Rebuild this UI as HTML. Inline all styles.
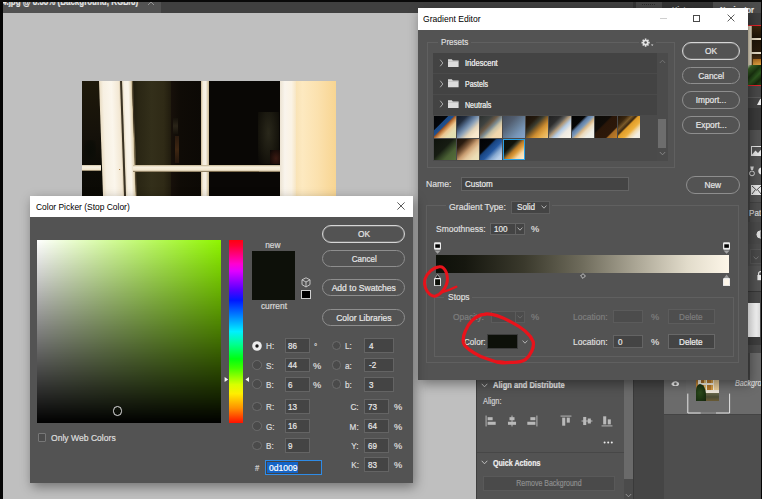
<!DOCTYPE html>
<html lang="en">
<head>
<meta charset="utf-8">
<title>Gradient Editor</title>
<style>
*{box-sizing:border-box;margin:0;padding:0}
html,body{width:762px;height:499px;overflow:hidden}
body{position:relative;background:#bfbfbf;font-family:"Liberation Sans",sans-serif;font-size:10px;color:#dedede;line-height:1}
.a{position:absolute}
.t{position:absolute;white-space:nowrap;display:block;-webkit-text-stroke:0.22px}
.in{position:absolute;background:#444;border:1px solid #646464}
.btn{position:absolute;border:1px solid #8e8e8e;border-radius:10px}
.btn.def{border-color:#d6d6d6;box-shadow:inset 0 0 0 0.7px #7c7c7c}
.rad{position:absolute;width:9.6px;height:9.6px;border-radius:50%;border:1px solid #6c6c6c;background:#4a4a4a}
.rad.on{border:2.7px solid #e8e8e8;background:#2e2e2e}
.fs{position:absolute;border:1px solid #606060}
.dlg{position:absolute;background:#535353;box-shadow:2px 4px 11px rgba(0,0,0,.40)}
</style>
</head>
<body>

<!-- application chrome -->
<div class="a" style="left:0px;top:0px;width:762px;height:12.6px;background:#404040;"></div>
<div class="a" style="left:0px;top:0px;width:762px;height:1.8px;background:#0a0a0a;"></div>
<div class="a" style="left:3px;top:1.8px;width:158px;height:10.8px;background:#525252;overflow:hidden"><span class="t" style="left:-1.4px;top:-7px;height:13px;line-height:13px;font-size:10.6px;font-weight:bold;color:#e4e4e4;transform-origin:0 50%;transform:scaleX(0.752)">4.jpg @ 8.33% (Background, RGB/8) *</span><svg class="a" style="left:144.4px;top:-3.4px" width="8" height="8" viewBox="0 0 8 8"><path d="M1 1L7 7M7 1L1 7" stroke="#9c9c9c" stroke-width="0.9"/></svg></div>
<div class="a" style="left:0px;top:1.8px;width:3px;height:498px;background:#050505;"></div>
<!-- photo on canvas -->
<div class="a" style="left:82px;top:80.5px;width:254px;height:120px;background:#0c0a06;overflow:hidden"><div class="a" style="left:0px;top:0px;width:24px;height:120px;background:linear-gradient(to bottom,#1e190a,#15110a 45%,#0d0c06 70%,#0a0904);"></div><div class="a" style="left:2px;top:59.5px;width:12px;height:22px;background:radial-gradient(ellipse at 50% 50%,#0a0c06 0%,#0d0d07 60%,rgba(13,13,7,0) 100%);"></div><div class="a" style="left:49px;top:0px;width:41px;height:120px;background:linear-gradient(to right,#1c190c,#2a2614 18%,#332f1a 50%,#2f2a16 80%,#1f1a0d);"></div><div class="a" style="left:88.6px;top:0px;width:31px;height:120px;background:linear-gradient(to right,#17100a,#0f0b06 30%,#0c0905);"></div><div class="a" style="left:93.4px;top:55.5px;width:3.6px;height:27px;background:linear-gradient(to bottom,#2a1a0e,#3e2612 50%,#24160c);"></div><div class="a" style="left:91px;top:37.5px;width:5px;height:16px;background:linear-gradient(to bottom,#15110a,#2a2418 50%,#15110a);"></div><div class="a" style="left:126.5px;top:0px;width:72.5px;height:120px;background:#090705;"></div><div class="a" style="left:176px;top:31.5px;width:21px;height:52px;background:radial-gradient(ellipse at 50% 40%,#2a281b 0%,#17150d 60%,#090705 100%);"></div><div class="a" style="left:188px;top:69.5px;width:10px;height:14px;background:radial-gradient(ellipse at 60% 60%,#3a1a12 0%,#1a0c08 70%,#090705 100%);"></div><div class="a" style="left:16.7px;top:0;width:40px;height:120px;transform-origin:0 0;transform:skewX(2deg)"><div class="a" style="left:0;top:0;width:21.6px;height:120px;background:linear-gradient(to right,#e9dcc2,#f7f0e2 18%,#fbf6ec 55%,#f3e8d4 88%,#cdbd9c)"></div><div class="a" style="left:21.4px;top:0;width:1.3px;height:120px;background:#3a3222"></div><div class="a" style="left:22.7px;top:0;width:10px;height:120px;background:linear-gradient(to right,#e4d8be,#f8f2e6 22%,#faf5ea 60%,#e6d9bc 88%,#b8a67e)"></div><div class="a" style="left:32.7px;top:0;width:1.8px;height:120px;background:linear-gradient(to bottom,#6a5c40,#3a3020 30%,#8a7a58 55%,#4a3e28 80%,#6a5c40)"></div><div class="a" style="left:17px;top:88px;width:1.2px;height:1.2px;background:#a8783c"></div></div><div class="a" style="left:119.2px;top:0px;width:7.4px;height:120px;background:linear-gradient(to right,#c8b692,#f4ecdc 25%,#f8f2e6 60%,#c4b28c);"></div><div class="a" style="left:0px;top:84.3px;width:18.6px;height:6.4px;background:linear-gradient(to bottom,#d4c6a6,#f8f2e4 30%,#f0e4ca 80%,#6a5a3c);"></div><div class="a" style="left:51.4px;top:84.5px;width:148px;height:6.6px;background:linear-gradient(to bottom,#c0b08c,#f8f1e0 28%,#f2e6cc 75%,#6e5e40);"></div><div class="a" style="left:127px;top:90.9px;width:50px;height:0.9px;background:#7a6a4c;"></div><div class="a" style="left:198.4px;top:0px;width:16px;height:120px;background:linear-gradient(to right,#ece3d2,#f9f4ec 30%,#fbf3e4 72%,#f7e6c4);"></div><div class="a" style="left:214px;top:0px;width:40px;height:120px;background:linear-gradient(to right,#f9e3b6,#fde9c0 16%,#fbe1ae 55%,#f8d592 100%);"></div></div>
<!-- properties panel -->
<div class="a" style="left:475.8px;top:360px;width:157.4px;height:139px;background:#535353;"></div>
<div class="a" style="left:475.8px;top:360px;width:1px;height:139px;background:#3e3e3e;"></div>
<svg class="a" style="left:481px;top:383px" width="7" height="5" viewBox="0 0 7 5"><path d="M0.7 0.8L3.5 3.8L6.3 0.8" stroke="#c8c8c8" stroke-width="0.9" fill="none"/></svg>
<span class="t" style="top:379.25px;height:11.3px;line-height:11.3px;font-size:9.4px;left:492.9px;transform-origin:0 50%;transform:scaleX(0.804);color:#eeeeee;font-weight:bold;">Align and Distribute</span>
<span class="t" style="top:396.3px;height:10.8px;line-height:10.8px;font-size:9px;left:482.8px;transform-origin:0 50%;transform:scaleX(0.822);color:#d0d0d0;">Align:</span>
<svg class="a" style="left:484.7px;top:414.5px" width="12" height="12" viewBox="0 0 11 11"><path d="M1 0.5V10.5" stroke="#b9b9b9" stroke-width="0.9"/><rect x="2.4" y="2" width="4.6" height="2.8" fill="#b9b9b9"/><rect x="2.4" y="6.2" width="7.4" height="2.8" fill="#b9b9b9"/></svg>
<svg class="a" style="left:505.5px;top:414.5px" width="12" height="12" viewBox="0 0 11 11"><path d="M5.5 0.5V10.5" stroke="#b9b9b9" stroke-width="0.9"/><rect x="3.2" y="2" width="4.6" height="2.8" fill="#b9b9b9"/><rect x="1.8" y="6.2" width="7.4" height="2.8" fill="#b9b9b9"/></svg>
<svg class="a" style="left:526.3px;top:414.5px" width="12" height="12" viewBox="0 0 11 11"><path d="M10 0.5V10.5" stroke="#b9b9b9" stroke-width="0.9"/><rect x="4" y="2" width="4.6" height="2.8" fill="#b9b9b9"/><rect x="1.2" y="6.2" width="7.4" height="2.8" fill="#b9b9b9"/></svg>
<svg class="a" style="left:560px;top:414.5px" width="12" height="12" viewBox="0 0 11 11"><path d="M0.5 1H10.5" stroke="#b9b9b9" stroke-width="0.9"/><rect x="2" y="2.4" width="2.8" height="7.4" fill="#b9b9b9"/><rect x="6.2" y="2.4" width="2.8" height="4.6" fill="#b9b9b9"/></svg>
<svg class="a" style="left:580.5px;top:414.5px" width="12" height="12" viewBox="0 0 11 11"><path d="M0.5 5.5H10.5" stroke="#b9b9b9" stroke-width="0.9"/><rect x="2" y="1.8" width="2.8" height="7.4" fill="#b9b9b9"/><rect x="6.2" y="3.2" width="2.8" height="4.6" fill="#b9b9b9"/></svg>
<svg class="a" style="left:600.6px;top:414.5px" width="12" height="12" viewBox="0 0 11 11"><path d="M0.5 10H10.5" stroke="#b9b9b9" stroke-width="0.9"/><rect x="2" y="1.2" width="2.8" height="7.4" fill="#b9b9b9"/><rect x="6.2" y="4" width="2.8" height="4.6" fill="#b9b9b9"/></svg>
<svg class="a" style="left:603px;top:441.4px" width="11" height="3" viewBox="0 0 11 3"><circle cx="1.6" cy="1.4" r="1" fill="#ececec"/><circle cx="5.2" cy="1.4" r="1" fill="#ececec"/><circle cx="8.8" cy="1.4" r="1" fill="#ececec"/></svg>
<div class="a" style="left:476.8px;top:452.2px;width:147px;height:1px;background:#474747;"></div>
<svg class="a" style="left:481px;top:460.4px" width="7" height="5" viewBox="0 0 7 5"><path d="M0.7 0.8L3.5 3.8L6.3 0.8" stroke="#c8c8c8" stroke-width="0.9" fill="none"/></svg>
<span class="t" style="top:456.65px;height:11.3px;line-height:11.3px;font-size:9.4px;left:492.9px;transform-origin:0 50%;transform:scaleX(0.757);color:#eeeeee;font-weight:bold;">Quick Actions</span>
<div class="a" style="left:482.9px;top:475.8px;width:132.6px;height:15.2px;background:#4a4a4a;border:1px solid #595959"></div>
<span class="t" style="top:478px;height:11px;line-height:11px;font-size:9.2px;left:486.24px;width:125.92px;text-align:center;transform-origin:50% 50%;transform:scaleX(0.762);color:#8e8e8e;">Remove Background</span>
<div class="a" style="left:623.6px;top:360px;width:9.8px;height:139px;background:#4b4b4b;"></div>
<div class="a" style="left:624.4px;top:360px;width:8.6px;height:119.4px;background:#6a6a6a;"></div>
<svg class="a" style="left:625px;top:493px" width="7" height="5" viewBox="0 0 7 5"><path d="M0.8 1L3.5 3.8L6.2 1" stroke="#9a9a9a" stroke-width="0.9" fill="none"/></svg>
<!-- right column panels -->
<div class="a" style="left:633.2px;top:12.6px;width:31px;height:487px;background:#454545;"></div>
<div class="a" style="left:633.2px;top:12.6px;width:1px;height:487px;background:#3a3a3a;"></div>
<div class="a" style="left:664px;top:12.6px;width:98px;height:487px;background:#4e4e4e;"></div>
<div class="a" style="left:664px;top:340px;width:98px;height:73.6px;background:#6b6b6b;"></div>
<div class="a" style="left:664px;top:413.8px;width:98px;height:1.2px;background:#444;"></div>
<div class="a" style="left:686px;top:340px;width:1px;height:73.6px;background:#626262;"></div>
<div class="a" style="left:727.4px;top:340px;width:1px;height:73.6px;background:#626262;"></div>
<svg class="a" style="left:670.6px;top:380.6px" width="8.8" height="5.8" viewBox="0 0 8.8 5.8"><path d="M0.2 2.9C1.6 0.8 3 0.2 4.4 0.2S7.2 0.8 8.6 2.9C7.2 5 5.8 5.6 4.4 5.6S1.6 5 0.2 2.9Z" fill="#f0f0f0"/><circle cx="4.4" cy="2.9" r="1.35" fill="#6b6b6b"/></svg>
<div class="a" style="left:686.4px;top:340px;width:43.8px;height:73.6px;background:#6e6e6e;"></div>
<svg class="a" style="left:686px;top:380px" width="45" height="34" viewBox="0 0 45 34"><path d="M1.8 13.6V33H14.8M30 33H43.6V13.6" stroke="#e4e4e4" stroke-width="1" fill="none"/><path d="M14.8 33H30" stroke="#8e8e8e" stroke-width="1"/></svg>
<div class="a" style="left:696.1px;top:371px;width:23.2px;height:29.8px;background:#3a2c18;overflow:hidden"><div class="a" style="left:0;top:0;width:23.2px;height:20px;background:linear-gradient(to bottom,#6a4418,#9a6420 40%,#c88c3c 70%,#8a6a3c)"></div><div class="a" style="left:2.4px;top:5px;width:20.8px;height:16px;background:linear-gradient(to right,#f4eee0 0 12%,#a86c28 12% 30%,#e8c070 30% 38%,#f4eee0 38% 44%,#b87a2c 44% 62%,#d8a048 62% 70%,#f4eee0 70% 78%,#e8cc98 78% 100%)"></div><div class="a" style="left:2.4px;top:12.4px;width:16px;height:1.2px;background:#f4eee0"></div><div class="a" style="left:2.4px;top:19.4px;width:20.8px;height:2.6px;background:#eee8da"></div><div class="a" style="left:9px;top:22px;width:14.2px;height:7.8px;background:linear-gradient(to bottom,#6a6a4c,#4a4c34 50%,#6a5a34)"></div><div class="a" style="left:0;top:13px;width:10px;height:16.8px;background:radial-gradient(ellipse at 40% 50%,#2c4c1c 0%,#1c3412 60%,#16260e 100%);border-radius:40% 60% 0 0"></div></div>
<span class="t" style="top:378.45px;height:10.3px;line-height:10.3px;font-size:8.6px;left:734.9px;transform-origin:0 50%;transform:scaleX(0.840);color:#e4e4e4;font-style:italic;-webkit-text-stroke:0.1px;">Background</span>
<!-- right strip -->
<div class="a" style="left:633.2px;top:1.8px;width:129px;height:10.8px;background:#333;"></div>
<div class="a" style="left:712.8px;top:1.8px;width:49.2px;height:10.8px;background:#4d4d4d;"></div>
<span class="t" style="top:4.35px;height:11.5px;line-height:11.5px;font-size:9.6px;left:720.4px;transform-origin:0 50%;transform:scaleX(0.768);color:#ededed;font-weight:bold;">Navigator</span>
<span class="t" style="top:4.35px;height:11.5px;line-height:11.5px;font-size:9.6px;left:671.6px;transform-origin:0 50%;transform:scaleX(0.756);color:#a8a8a8;font-weight:bold;">History</span>
<div class="a" style="left:635.8px;top:1.8px;width:26.2px;height:6px;background:#474747;"></div>
<div class="a" style="left:642px;top:3.6px;width:13px;height:1.6px;background:repeating-linear-gradient(to right,#2c2c2c 0 1px,#474747 1px 2px);"></div>
<div class="a" style="left:748px;top:12.6px;width:14px;height:74px;background:#3e3e3e;"></div>
<div class="a" style="left:748.4px;top:24.8px;width:13px;height:61px;background:#e0222a;"></div>
<div class="a" style="left:748.4px;top:26px;width:13px;height:58.6px;background:#241808;overflow:hidden"><div class="a" style="left:0;top:0;width:13px;height:39px;background:linear-gradient(to bottom,#3a2810,#1e1408 30%,#2a1c0c 70%,#6a4418)"></div><div class="a" style="left:0;top:0;width:3.6px;height:40px;background:linear-gradient(to right,#d8ccb0,#f0e8d4 60%,#a89878)"></div><div class="a" style="left:3px;top:12px;width:10px;height:1.8px;background:#e4dac4"></div><div class="a" style="left:3px;top:26px;width:10px;height:1.8px;background:#e4dac4"></div><div class="a" style="left:5px;top:33px;width:8px;height:6px;background:linear-gradient(to bottom,#a86a20,#e0a040)"></div><div class="a" style="left:0;top:38.6px;width:13px;height:20px;background:linear-gradient(135deg,#dfe6d0 0%,#3c6a28 14%,#1a3410 40%,#2e5a20 60%,#16280c 80%,#24481a 100%)"></div></div>
<div class="a" style="left:748px;top:85.8px;width:14px;height:11.6px;background:#484848;"></div>
<div class="a" style="left:748px;top:97.2px;width:14px;height:1px;background:#5a5a5a;"></div>
<div class="a" style="left:748px;top:98.2px;width:14px;height:10px;background:#444;"></div>
<svg class="a" style="left:756.8px;top:98.4px" width="5" height="7" viewBox="0 0 5 7"><path d="M0 7L3.4 0.4L5 2.4V7Z" fill="#ececec"/></svg>
<div class="a" style="left:748px;top:108px;width:14px;height:22px;background:#3a3a3a;"></div>
<div class="a" style="left:748px;top:130px;width:14px;height:72px;background:#535353;"></div>
<div class="a" style="left:748px;top:130px;width:2.2px;height:250px;background:#454545;"></div>
<svg class="a" style="left:751.4px;top:145.6px" width="11" height="10" viewBox="0 0 11 10"><rect x="0.5" y="0.5" width="10" height="9" fill="#535353" stroke="#e6e6e6" stroke-width="1"/><path d="M1 8.5L4.5 4.5L7 7L11 2.5V9.5H1Z" fill="#e6e6e6"/></svg>
<svg class="a" style="left:748.6px;top:166px" width="6" height="11" viewBox="0 0 6 11"><path d="M1.2 0.5H4.8L4 4H2Z" fill="#dcdcdc"/><circle cx="3" cy="7.4" r="2.4" fill="none" stroke="#dcdcdc" stroke-width="1"/></svg>
<svg class="a" style="left:758.2px;top:167px" width="4" height="8" viewBox="0 0 4 8"><path d="M4 0.2C1.4 0.6 0.3 2.2 0.3 4S1.4 7.4 4 7.8Z" fill="#e8e8e8"/></svg>
<svg class="a" style="left:751.4px;top:185px" width="11" height="10" viewBox="0 0 11 10"><rect x="0.5" y="0.5" width="10" height="9" fill="#e6e6e6" stroke="#e6e6e6" stroke-width="1"/><path d="M1 1L5.5 5.2L10 1M1 9L4.4 4.6M10 9L6.6 4.6" stroke="#535353" stroke-width="1" fill="none"/></svg>
<div class="a" style="left:748px;top:202px;width:14px;height:1px;background:#444;"></div>
<span class="t" style="top:207.4px;height:11.4px;line-height:11.4px;font-size:9.5px;left:749.4px;transform-origin:0 50%;transform:scaleX(0.850);color:#d8d8d8;">Paths</span>
<div class="a" style="left:748px;top:222px;width:14px;height:22px;background:#4a4a4a;"></div>
<svg class="a" style="left:755.6px;top:230px" width="7" height="9" viewBox="0 0 7 9"><circle cx="4.5" cy="4.5" r="3.6" fill="none" stroke="#e0e0e0" stroke-width="1"/><path d="M4.5 0.9A3.6 3.6 0 0 0 4.5 8.1Z" fill="#e0e0e0"/></svg>
<div class="a" style="left:748px;top:244px;width:14px;height:22px;background:#4d4d4d;"></div>
<div class="a" style="left:750px;top:249.4px;width:12px;height:14.6px;background:#4a4a4a;border:1px solid #565656"></div>
<svg class="a" style="left:753.4px;top:255.6px" width="6" height="4" viewBox="0 0 6 4"><path d="M0.6 0.6L3 3.2L5.4 0.6" stroke="#7c7c7c" stroke-width="0.85" fill="none"/></svg>
<div class="a" style="left:748px;top:266px;width:14px;height:25px;background:#535353;"></div>
<svg class="a" style="left:756.6px;top:270.6px" width="6" height="10" viewBox="0 0 6 10"><path d="M1.6 4V2.6A2 2 0 0 1 5.6 2.6V4" fill="none" stroke="#e8e8e8" stroke-width="1.1"/><rect x="0.4" y="4" width="6" height="5.2" fill="#e8e8e8"/></svg>
<div class="a" style="left:748px;top:291px;width:14px;height:1.4px;background:#383838;"></div>
<div class="a" style="left:748px;top:292.4px;width:14px;height:52px;background:#4a4a4a;"></div>
<div class="a" style="left:748px;top:302.8px;width:12.4px;height:34px;background:linear-gradient(to right,#ffffff,#f6f6f6 70%,#dcdcdc);"></div>
<div class="a" style="left:748px;top:337.2px;width:14px;height:7.4px;background:#3e3e3e;"></div>
<div class="a" style="left:748px;top:344.6px;width:14px;height:8.4px;background:#4c4c4c;"></div>
<!-- Gradient Editor dialog -->
<div class="dlg" style="left:418px;top:8px;width:330px;height:372px;"></div>
<div class="a" style="left:418px;top:8px;width:330px;height:21.6px;background:#fff;"></div>
<span class="t" style="top:13.15px;height:11.5px;line-height:11.5px;font-size:9.6px;left:423.2px;transform-origin:0 50%;transform:scaleX(0.892);color:#000;-webkit-text-stroke:0;">Gradient Editor</span>
<div class="a" style="left:660.2px;top:18px;width:7px;height:1px;background:#cfcfcf;"></div>
<div class="a" style="left:693px;top:14.8px;width:7.4px;height:7.2px;border:1px solid #4a4a4a"></div>
<svg class="a" style="left:725.7px;top:13.2px" width="10" height="10" viewBox="0 0 10 10"><path d="M1.6 1.6L8.4 8.4M8.4 1.6L1.6 8.4" stroke="#333" stroke-width="0.8" fill="none"/></svg>
<div class="fs" style="left:427px;top:41.7px;width:248px;height:126.4px;"></div>
<div class="a" style="left:437.5px;top:36px;width:33.4px;height:11px;background:#535353;"></div>
<span class="t" style="top:36px;height:11.4px;line-height:11.4px;font-size:9.5px;left:440.5px;transform-origin:0 50%;transform:scaleX(0.851);">Presets</span>
<div class="a" style="left:639px;top:36px;width:17px;height:12px;background:#535353;"></div>
<svg class="a" style="left:641.2px;top:37.5px" width="13" height="10" viewBox="0 0 13 10"><g fill="#e2e2e2"><circle cx="4.6" cy="4.6" r="2.9"/><g stroke="#e2e2e2" stroke-width="1.6"><path d="M4.6 0.5V8.7M0.5 4.6H8.7M1.7 1.7L7.5 7.5M7.5 1.7L1.7 7.5"/></g><circle cx="4.6" cy="4.6" r="1.25" fill="#535353"/><path d="M10 6.6H12.4L11.2 8Z"/></g></svg>
<div class="a" style="left:433px;top:52.8px;width:234.6px;height:108.4px;background:#4a4a4a;"></div>
<div class="a" style="left:433px;top:53.4px;width:224.4px;height:20px;background:#434343;"></div>
<svg class="a" style="left:438.9px;top:58.9px" width="5" height="8" viewBox="0 0 5 8"><path d="M1.2 0.7L3.8 4L1.2 7.3" stroke="#c8c8c8" stroke-width="0.8" fill="none"/></svg>
<svg class="a" style="left:447.8px;top:58.5px" width="10.8" height="8.4" viewBox="0 0 10.8 8.4"><path d="M0 0.2H3.8L4.8 1.4H10.6V8.2H0Z" fill="#dcdcdc"/><path d="M0 2.3H10.6" stroke="#a4a4a4" stroke-width="0.5"/></svg>
<span class="t" style="top:58.3px;height:10.6px;line-height:10.6px;font-size:8.8px;left:465.1px;transform-origin:0 50%;transform:scaleX(0.857);color:#dcdcdc;text-shadow:0 0 0.4px #dcdcdc;">Iridescent</span>
<div class="a" style="left:433px;top:74.05px;width:224.4px;height:20px;background:#434343;"></div>
<svg class="a" style="left:438.9px;top:79.6px" width="5" height="8" viewBox="0 0 5 8"><path d="M1.2 0.7L3.8 4L1.2 7.3" stroke="#c8c8c8" stroke-width="0.8" fill="none"/></svg>
<svg class="a" style="left:447.8px;top:79.2px" width="10.8" height="8.4" viewBox="0 0 10.8 8.4"><path d="M0 0.2H3.8L4.8 1.4H10.6V8.2H0Z" fill="#dcdcdc"/><path d="M0 2.3H10.6" stroke="#a4a4a4" stroke-width="0.5"/></svg>
<span class="t" style="top:79px;height:10.6px;line-height:10.6px;font-size:8.8px;left:465.1px;transform-origin:0 50%;transform:scaleX(0.797);color:#dcdcdc;text-shadow:0 0 0.4px #dcdcdc;">Pastels</span>
<div class="a" style="left:433px;top:94.7px;width:224.4px;height:20px;background:#434343;"></div>
<svg class="a" style="left:438.9px;top:100.3px" width="5" height="8" viewBox="0 0 5 8"><path d="M1.2 0.7L3.8 4L1.2 7.3" stroke="#c8c8c8" stroke-width="0.8" fill="none"/></svg>
<svg class="a" style="left:447.8px;top:99.9px" width="10.8" height="8.4" viewBox="0 0 10.8 8.4"><path d="M0 0.2H3.8L4.8 1.4H10.6V8.2H0Z" fill="#dcdcdc"/><path d="M0 2.3H10.6" stroke="#a4a4a4" stroke-width="0.5"/></svg>
<span class="t" style="top:99.7px;height:10.6px;line-height:10.6px;font-size:8.8px;left:465.1px;transform-origin:0 50%;transform:scaleX(0.806);color:#dcdcdc;text-shadow:0 0 0.4px #dcdcdc;">Neutrals</span>
<div class="a" style="left:657.4px;top:52.8px;width:10.2px;height:108.4px;background:#4b4b4b;"></div>
<div class="a" style="left:658.3px;top:118.8px;width:7.4px;height:29.4px;background:#6d6d6d;"></div>
<svg class="a" style="left:659px;top:58.5px" width="7" height="5" viewBox="0 0 7 5"><path d="M0.8 4L3.5 1.2L6.2 4" stroke="#767676" stroke-width="0.9" fill="none"/></svg>
<svg class="a" style="left:658.8px;top:150.6px" width="7" height="5" viewBox="0 0 7 5"><path d="M0.8 1L3.5 3.8L6.2 1" stroke="#8c8c8c" stroke-width="0.9" fill="none"/></svg>
<div class="a" style="left:434px;top:116px;width:21.9px;height:21.8px;background:linear-gradient(135deg,#020305 0%,#05070c 31%,#1c4a86 34%,#21508e 45%,#9c5426 48%,#c98a4c 55%,#ecc690 64%,#e6deb0 77%,#dfe2b4 100%);"></div>
<div class="a" style="left:457px;top:116px;width:21.9px;height:21.8px;background:linear-gradient(135deg,#151c28 0%,#222c3c 22%,#5a7496 40%,#8aa0b8 52%,#e4d4b8 68%,#f8e8cc 82%,#fbeed6 100%);"></div>
<div class="a" style="left:480px;top:116px;width:21.9px;height:21.8px;background:linear-gradient(135deg,#2c302e 0%,#3e4240 26%,#6c5a46 40%,#7d8c92 52%,#c8c0a4 62%,#f0d6ac 76%,#f4dcb4 100%);"></div>
<div class="a" style="left:503px;top:116px;width:21.9px;height:21.8px;background:linear-gradient(135deg,#434c5a 0%,#525e70 30%,#647a92 52%,#7896b8 75%,#86a6cc 100%);"></div>
<div class="a" style="left:526px;top:116px;width:21.9px;height:21.8px;background:linear-gradient(135deg,#1a1008 0%,#241a0e 26%,#3a3c30 40%,#8a6228 52%,#cc8c30 64%,#e8ae4c 80%,#eec880 100%);"></div>
<div class="a" style="left:549px;top:116px;width:21.9px;height:21.8px;background:linear-gradient(135deg,#222 0%,#2e2e2e 26%,#5c5c5a 38%,#b09878 48%,#b4cce6 60%,#ece8e0 74%,#faf6ec 100%);"></div>
<div class="a" style="left:572px;top:116px;width:21.9px;height:21.8px;background:linear-gradient(135deg,#030303 0%,#060606 30%,#5c7aa0 38%,#7a98ba 48%,#d8b888 57%,#ecdcc0 66%,#eeeee6 80%,#f2f2ea 100%);"></div>
<div class="a" style="left:595px;top:116px;width:21.9px;height:21.8px;background:linear-gradient(135deg,#0c0a06 0%,#100c08 36%,#2a1608 42%,#2c180a 74%,#a86c24 78%,#c0802c 100%);"></div>
<div class="a" style="left:618px;top:116px;width:21.9px;height:21.8px;background:linear-gradient(135deg,#24160a 0%,#3a260e 20%,#7a5a2a 32%,#3a2610 42%,#e09c28 47%,#eeb03c 63%,#f0d8a8 73%,#f2eee2 85%,#f2eee2 100%);"></div>
<div class="a" style="left:434px;top:138.6px;width:21.9px;height:21.8px;background:linear-gradient(135deg,#0e120c 0%,#161c12 44%,#2e3c22 56%,#4a6034 72%,#56703c 100%);"></div>
<div class="a" style="left:457px;top:138.6px;width:21.9px;height:21.8px;background:linear-gradient(135deg,#1c120a 0%,#2a1c10 22%,#7a5638 38%,#c89c70 52%,#e4c69c 66%,#ecdcb4 82%,#ece4bc 100%);"></div>
<div class="a" style="left:480px;top:138.6px;width:21.9px;height:21.8px;background:linear-gradient(135deg,#020203 0%,#05070a 34%,#184480 40%,#2458a0 56%,#86a8d0 72%,#b4cce8 86%,#c4d4e8 100%);"></div>
<div class="a" style="left:503px;top:138.6px;width:21.9px;height:21.8px;background:linear-gradient(135deg,#0d1009 0%,#10120a 34%,#3a3a28 42%,#b87a28 52%,#dc9c3c 62%,#f4d8a8 76%,#fdf2e0 100%);outline:1.2px solid #27a0e6;outline-offset:-1px;"></div>
<div class="btn def" style="left:681.7px;top:41.7px;width:58.8px;height:18.2px;"></div>
<span class="t" style="top:44.9px;height:11.8px;line-height:11.8px;font-size:9.8px;left:684.02px;width:54.16px;text-align:center;transform-origin:50% 50%;transform:scaleX(0.850);color:#e6e6e6;">OK</span>
<div class="btn" style="left:681.7px;top:66.5px;width:58.8px;height:17.8px;"></div>
<span class="t" style="top:69.5px;height:11.8px;line-height:11.8px;font-size:9.8px;left:675.85px;width:70.51px;text-align:center;transform-origin:50% 50%;transform:scaleX(0.850);color:#e6e6e6;">Cancel</span>
<div class="btn" style="left:681.7px;top:91.2px;width:58.8px;height:17.8px;"></div>
<span class="t" style="top:94.2px;height:11.8px;line-height:11.8px;font-size:9.8px;left:673.13px;width:75.94px;text-align:center;transform-origin:50% 50%;transform:scaleX(0.850);color:#e6e6e6;">Import...</span>
<div class="btn" style="left:681.7px;top:116px;width:58.8px;height:17.8px;"></div>
<span class="t" style="top:119px;height:11.8px;line-height:11.8px;font-size:9.8px;left:672.85px;width:76.49px;text-align:center;transform-origin:50% 50%;transform:scaleX(0.850);color:#e6e6e6;">Export...</span>
<div class="btn" style="left:685.7px;top:175.5px;width:54.4px;height:18.2px;"></div>
<span class="t" style="top:178.7px;height:11.8px;line-height:11.8px;font-size:9.8px;left:683.1px;width:59.61px;text-align:center;transform-origin:50% 50%;transform:scaleX(0.850);color:#e6e6e6;">New</span>
<span class="t" style="top:178.15px;height:11.5px;line-height:11.5px;font-size:9.6px;left:426px;transform-origin:0 50%;transform:scaleX(0.898);">Name:</span>
<div class="in" style="left:460.6px;top:177.4px;width:168.6px;height:13.4px;"></div>
<span class="t" style="top:178px;height:11.4px;line-height:11.4px;font-size:9.5px;left:465px;transform-origin:0 50%;transform:scaleX(0.850);color:#e8e8e8;">Custom</span>
<div class="fs" style="left:425.7px;top:205px;width:313.4px;height:158.4px;"></div>
<div class="a" style="left:446px;top:200px;width:106px;height:12px;background:#535353;"></div>
<span class="t" style="top:201.05px;height:11.5px;line-height:11.5px;font-size:9.6px;left:448.9px;transform-origin:0 50%;transform:scaleX(0.905);">Gradient Type:</span>
<div class="in" style="left:511.4px;top:200.6px;width:38.8px;height:13.8px;border-color:#5e5e5e;"></div>
<span class="t" style="top:201.35px;height:11.5px;line-height:11.5px;font-size:9.6px;left:516.8px;transform-origin:0 50%;transform:scaleX(0.850);color:#e8e8e8;">Solid</span>
<svg class="a" style="left:541px;top:205.4px" width="6" height="4" viewBox="0 0 6 4"><path d="M0.6 0.6L3 3.2L5.4 0.6" stroke="#c4c4c4" stroke-width="0.85" fill="none"/></svg>
<span class="t" style="top:223.35px;height:11.5px;line-height:11.5px;font-size:9.6px;left:435.5px;transform-origin:0 50%;transform:scaleX(0.885);">Smoothness:</span>
<div class="in" style="left:490.4px;top:222.6px;width:25.4px;height:12.4px;"></div>
<span class="t" style="top:223.2px;height:11.4px;line-height:11.4px;font-size:9.5px;left:494px;transform-origin:0 50%;transform:scaleX(0.850);color:#e8e8e8;">100</span>
<div class="in" style="left:515.4px;top:222.6px;width:9.6px;height:12.4px;"></div>
<svg class="a" style="left:517.4px;top:227.2px" width="6" height="4" viewBox="0 0 6 4"><path d="M0.6 0.6L3 3.2L5.4 0.6" stroke="#c4c4c4" stroke-width="0.85" fill="none"/></svg>
<span class="t" style="top:223.35px;height:11.5px;line-height:11.5px;font-size:9.6px;left:530.8px;transform-origin:0 50%;transform:scaleX(0.961);">%</span>
<div class="a" style="left:436px;top:254.8px;width:292.5px;height:17.9px;background:linear-gradient(to right,#0d1009 0%,#16170f 10%,#3a392c 30%,#6f6c5c 50%,#aaa594 68%,#e2dccb 86%,#fdf6e8 100%);"></div>
<svg class="a" style="left:433.9px;top:242.1px" width="7.2" height="12" viewBox="0 0 7.2 12"><path d="M3.6 11.8L0.5 8.4H6.7Z" fill="#a2a2a2"/><rect x="0" y="0.2" width="7.2" height="7.6" rx="1.2" fill="#e9e9e9"/><rect x="1.3" y="2.3" width="4.6" height="3.5" fill="#000"/></svg>
<svg class="a" style="left:723px;top:242.1px" width="7.2" height="12" viewBox="0 0 7.2 12"><path d="M3.6 11.8L0.5 8.4H6.7Z" fill="#a2a2a2"/><rect x="0" y="0.2" width="7.2" height="7.6" rx="1.2" fill="#e9e9e9"/><rect x="1.3" y="2.3" width="4.6" height="3.5" fill="#000"/></svg>
<svg class="a" style="left:434px;top:273.6px" width="7.2" height="12.4" viewBox="0 0 7.2 12.4"><path d="M3.6 0.5L0.7 4.4H6.5Z" fill="#111" stroke="#d8d8d8" stroke-width="0.7"/><rect x="0.55" y="4.6" width="6.1" height="7.2" rx="0.8" fill="#0d1009" stroke="#ececec" stroke-width="1.1"/></svg>
<svg class="a" style="left:723px;top:273.6px" width="7.2" height="12.4" viewBox="0 0 7.2 12.4"><path d="M3.6 0.5L0.7 4.4H6.5Z" fill="#9a9a9a"/><rect x="0.55" y="4.6" width="6.1" height="7.2" rx="0.8" fill="#fdf6e8" stroke="#ececec" stroke-width="1.1"/></svg>
<svg class="a" style="left:579.5px;top:273px" width="6" height="6" viewBox="0 0 6 6"><path d="M3 0.6L5.4 3L3 5.4L0.6 3Z" fill="#535353" stroke="#e0e0e0" stroke-width="0.8"/></svg>
<div class="fs" style="left:433.6px;top:296.6px;width:300.8px;height:60.4px;"></div>
<div class="a" style="left:444.4px;top:291px;width:27.6px;height:11px;background:#535353;"></div>
<span class="t" style="top:291.1px;height:11.4px;line-height:11.4px;font-size:9.5px;left:447.5px;transform-origin:0 50%;transform:scaleX(0.889);">Stops</span>
<span class="t" style="top:310.85px;height:11.5px;line-height:11.5px;font-size:9.6px;left:453.4px;transform-origin:0 50%;transform:scaleX(0.880);color:#7e7e7e;">Opacity:</span>
<div class="a" style="left:490.6px;top:311px;width:25.4px;height:12.2px;background:#4c4c4c;border:1px solid #5b5b5b"></div>
<div class="a" style="left:515.4px;top:311px;width:9.8px;height:12.2px;background:#4c4c4c;border:1px solid #5b5b5b"></div>
<svg class="a" style="left:517.4px;top:315.4px" width="6" height="4" viewBox="0 0 6 4"><path d="M0.6 0.6L3 3.2L5.4 0.6" stroke="#6e6e6e" stroke-width="0.85" fill="none"/></svg>
<span class="t" style="top:310.85px;height:11.5px;line-height:11.5px;font-size:9.6px;left:530.8px;transform-origin:0 50%;transform:scaleX(0.961);color:#7e7e7e;">%</span>
<span class="t" style="top:310.85px;height:11.5px;line-height:11.5px;font-size:9.6px;left:572.9px;transform-origin:0 50%;transform:scaleX(0.888);color:#7e7e7e;">Location:</span>
<div class="a" style="left:613.2px;top:310.4px;width:30.2px;height:12.8px;background:#4c4c4c;border:1px solid #5b5b5b"></div>
<span class="t" style="top:310.85px;height:11.5px;line-height:11.5px;font-size:9.6px;left:651.4px;transform-origin:0 50%;transform:scaleX(0.961);color:#7e7e7e;">%</span>
<div class="a" style="left:667.6px;top:308.8px;width:47.4px;height:15px;background:#4e4e4e;border:1px solid #5c5c5c"></div>
<span class="t" style="top:310.75px;height:11.5px;line-height:11.5px;font-size:9.6px;left:657.42px;width:67.75px;text-align:center;transform-origin:50% 50%;transform:scaleX(0.850);color:#7e7e7e;">Delete</span>
<span class="t" style="top:335.95px;height:11.5px;line-height:11.5px;font-size:9.6px;left:463.6px;transform-origin:0 50%;transform:scaleX(0.843);">Color:</span>
<div class="a" style="left:486.7px;top:334.4px;width:31.2px;height:14.4px;background:#0d1009;border:1px solid #3c3c3c"></div>
<svg class="a" style="left:521.5px;top:340.3px" width="6" height="4" viewBox="0 0 6 4"><path d="M0.6 0.6L3 3.2L5.4 0.6" stroke="#c4c4c4" stroke-width="0.85" fill="none"/></svg>
<span class="t" style="top:335.95px;height:11.5px;line-height:11.5px;font-size:9.6px;left:572.9px;transform-origin:0 50%;transform:scaleX(0.888);">Location:</span>
<div class="in" style="left:613.2px;top:335.3px;width:30.2px;height:13px;"></div>
<span class="t" style="top:335.8px;height:11.4px;line-height:11.4px;font-size:9.5px;left:617.6px;transform-origin:0 50%;transform:scaleX(0.850);color:#e8e8e8;">0</span>
<span class="t" style="top:335.95px;height:11.5px;line-height:11.5px;font-size:9.6px;left:651.4px;transform-origin:0 50%;transform:scaleX(0.961);">%</span>
<div class="a" style="left:667.6px;top:334.4px;width:47.4px;height:15px;background:#444;border:1px solid #686868"></div>
<span class="t" style="top:335.95px;height:11.5px;line-height:11.5px;font-size:9.6px;left:657.42px;width:67.75px;text-align:center;transform-origin:50% 50%;transform:scaleX(0.850);color:#efefef;">Delete</span>
<svg class="a" style="left:418px;top:260px" width="125" height="112" viewBox="418 260 125 112"><g fill="none" stroke="#e9131b" stroke-linecap="round" stroke-linejoin="round"><path stroke-width="3" d="M439.4,266.8 C433,267.4 427,273 424.8,279.5 C423.6,285 426,291 429.9,294.4 C432,296.2 434,296.4 435.6,296 C438.4,295.2 441,293 442.8,290.6 C445.8,287 447.6,283 447.4,278.7 C447.2,274 446,270.2 443.2,267.8 C442,266.8 440.6,266.6 439.4,266.8"/><path stroke-width="2.4" d="M441.4,292.4 C446,291.2 452,289 456.3,286.8"/><path stroke-width="3.3" d="M484.9,314.1 C490,313.5 500,316 511,321.9 C520,326.5 530,333 533.1,341.5 C534.5,347 531,355 525.3,359.7 C521,362.5 515,362.5 511,362.3 C506,362.5 502,363.6 498,362.3 C494,361.6 491,360 487.6,359 C482,357.5 478,355.5 474.5,353.2 C469,349.5 464.5,347 463.5,342.8 C462.5,338 463.5,335 465.4,331 C467,327 469,323.5 471.9,320.6 C474.5,318 477,316.5 479.7,315.4 C481.5,314.7 483.5,314.2 485.5,314.3"/><path stroke-width="1.2" d="M496,361.6 C498,360.6 502,360.8 505,361.6"/></g></svg>
<!-- Color Picker dialog -->
<div class="dlg" style="left:30px;top:196px;width:382.6px;height:287px;"></div>
<div class="a" style="left:30px;top:196px;width:382.6px;height:21.4px;background:#fff;"></div>
<span class="t" style="top:201.05px;height:11.5px;line-height:11.5px;font-size:9.6px;left:35.8px;transform-origin:0 50%;transform:scaleX(0.879);color:#000;-webkit-text-stroke:0;">Color Picker (Stop Color)</span>
<svg class="a" style="left:395.5px;top:201.4px" width="10" height="10" viewBox="0 0 10 10"><path d="M1.4 1.4L8.6 8.6M8.6 1.4L1.4 8.6" stroke="#333" stroke-width="0.8" fill="none"/></svg>
<div class="a" style="left:37.3px;top:239.7px;width:184.1px;height:182.9px;background:linear-gradient(to top,#000,rgba(0,0,0,0)),linear-gradient(to right,#fff,#8ff500);"></div>
<div class="a" style="left:112.7px;top:406.4px;width:9.4px;height:9.4px;border-radius:50%;border:1.2px solid #dedede;box-shadow:0 0 0 0.4px #222"></div>
<div class="a" style="left:229px;top:240px;width:14px;height:182.5px;background:linear-gradient(to bottom,#ff0010 0%,#ff0030 3%,#ff00d0 13%,#e000ff 17%,#5a00ff 27%,#0018ff 33%,#0070ff 40%,#00f0ff 50%,#00ff90 57%,#00ff10 65%,#40ff00 70%,#d8ff00 79%,#ffee00 84%,#ff9000 92%,#ff1000 100%);"></div>
<svg class="a" style="left:221.5px;top:374.8px" width="29" height="9" viewBox="0 0 29 9"><path d="M2.6 1.9L6.2 4.5L2.6 7.1Z M27 1.9L23.4 4.5L27 7.1Z" fill="#f4f4f4"/></svg>
<span class="t" style="top:238.75px;height:11.5px;line-height:11.5px;font-size:9.6px;left:244.49px;width:57.61px;text-align:center;transform-origin:50% 50%;transform:scaleX(0.863);color:#d8d8d8;">new</span>
<div class="a" style="left:251.7px;top:251px;width:43.4px;height:49.2px;background:#0d1009;"></div>
<span class="t" style="top:300.35px;height:11.5px;line-height:11.5px;font-size:9.6px;left:238.76px;width:69.88px;text-align:center;transform-origin:50% 50%;transform:scaleX(0.874);color:#d8d8d8;">current</span>
<svg class="a" style="left:301px;top:277px" width="10" height="11" viewBox="0 0 10 11"><path d="M5 0.8L9 2.8V7.6L5 10L1 7.6V2.8Z M1 2.8L5 5L9 2.8 M5 5V10" stroke="#cfcfcf" stroke-width="0.9" fill="none"/></svg>
<div class="a" style="left:301.3px;top:289.6px;width:9.8px;height:9.8px;background:#000;border:1px solid #d0d0d0"></div>
<div class="btn def" style="left:322.4px;top:225px;width:82.8px;height:17.8px;"></div>
<span class="t" style="top:228.3px;height:11.8px;line-height:11.8px;font-size:9.8px;left:336.72px;width:54.16px;text-align:center;transform-origin:50% 50%;transform:scaleX(0.850);color:#e6e6e6;">OK</span>
<div class="btn" style="left:322.4px;top:249.6px;width:82.8px;height:17.4px;"></div>
<span class="t" style="top:252.7px;height:11.8px;line-height:11.8px;font-size:9.8px;left:328.55px;width:70.51px;text-align:center;transform-origin:50% 50%;transform:scaleX(0.820);color:#e6e6e6;">Cancel</span>
<div class="btn" style="left:322.4px;top:279px;width:82.8px;height:17.2px;"></div>
<span class="t" style="top:282.2px;height:11.8px;line-height:11.8px;font-size:9.8px;left:307.03px;width:113.54px;text-align:center;transform-origin:50% 50%;transform:scaleX(0.874);color:#e6e6e6;">Add to Swatches</span>
<div class="btn" style="left:322.4px;top:308.8px;width:82.8px;height:17.4px;"></div>
<span class="t" style="top:311.9px;height:11.8px;line-height:11.8px;font-size:9.8px;left:311.94px;width:103.73px;text-align:center;transform-origin:50% 50%;transform:scaleX(0.868);color:#e6e6e6;">Color Libraries</span>
<svg class="a" style="left:252px;top:340.5px" width="10" height="10" viewBox="0 0 10 10"><circle cx="5" cy="5" r="4.8" fill="#ececec"/><circle cx="5" cy="5" r="1.7" fill="#161616"/></svg>
<span class="t" style="top:340.25px;height:11.5px;line-height:11.5px;font-size:9.6px;left:265.8px;transform-origin:0 50%;transform:scaleX(0.850);">H:</span>
<div class="in" style="left:284.6px;top:338.3px;width:25px;height:14.6px;"></div>
<span class="t" style="top:340px;height:11.4px;line-height:11.4px;font-size:9.5px;left:288.4px;transform-origin:0 50%;transform:scaleX(0.850);color:#e8e8e8;">86</span>
<span class="t" style="top:340.95px;height:11.5px;line-height:11.5px;font-size:9.6px;left:314.4px;transform-origin:0 50%;transform:scaleX(0.850);">°</span>
<div class="rad" style="left:252.2px;top:360.1px;width:9.6px;height:9.6px;"></div>
<span class="t" style="top:359.65px;height:11.5px;line-height:11.5px;font-size:9.6px;left:265.8px;transform-origin:0 50%;transform:scaleX(0.850);">S:</span>
<div class="in" style="left:284.6px;top:357.7px;width:25px;height:14.6px;"></div>
<span class="t" style="top:359.4px;height:11.4px;line-height:11.4px;font-size:9.5px;left:288.4px;transform-origin:0 50%;transform:scaleX(0.850);color:#e8e8e8;">44</span>
<span class="t" style="top:359.65px;height:11.5px;line-height:11.5px;font-size:9.6px;left:312.7px;transform-origin:0 50%;transform:scaleX(0.961);">%</span>
<div class="rad" style="left:252.2px;top:379.4px;width:9.6px;height:9.6px;"></div>
<span class="t" style="top:378.95px;height:11.5px;line-height:11.5px;font-size:9.6px;left:265.8px;transform-origin:0 50%;transform:scaleX(0.850);">B:</span>
<div class="in" style="left:284.6px;top:377px;width:25px;height:14.6px;"></div>
<span class="t" style="top:378.7px;height:11.4px;line-height:11.4px;font-size:9.5px;left:288.4px;transform-origin:0 50%;transform:scaleX(0.850);color:#e8e8e8;">6</span>
<span class="t" style="top:378.95px;height:11.5px;line-height:11.5px;font-size:9.6px;left:312.7px;transform-origin:0 50%;transform:scaleX(0.961);">%</span>
<div class="rad" style="left:252.2px;top:401.6px;width:9.6px;height:9.6px;"></div>
<span class="t" style="top:401.15px;height:11.5px;line-height:11.5px;font-size:9.6px;left:265.8px;transform-origin:0 50%;transform:scaleX(0.850);">R:</span>
<div class="in" style="left:284.6px;top:399.2px;width:25px;height:14.6px;"></div>
<span class="t" style="top:400.9px;height:11.4px;line-height:11.4px;font-size:9.5px;left:288.4px;transform-origin:0 50%;transform:scaleX(0.850);color:#e8e8e8;">13</span>
<div class="rad" style="left:252.2px;top:421.1px;width:9.6px;height:9.6px;"></div>
<span class="t" style="top:420.65px;height:11.5px;line-height:11.5px;font-size:9.6px;left:265.8px;transform-origin:0 50%;transform:scaleX(0.850);">G:</span>
<div class="in" style="left:284.6px;top:418.7px;width:25px;height:14.6px;"></div>
<span class="t" style="top:420.4px;height:11.4px;line-height:11.4px;font-size:9.5px;left:288.4px;transform-origin:0 50%;transform:scaleX(0.850);color:#e8e8e8;">16</span>
<div class="rad" style="left:252.2px;top:440.5px;width:9.6px;height:9.6px;"></div>
<span class="t" style="top:440.05px;height:11.5px;line-height:11.5px;font-size:9.6px;left:265.8px;transform-origin:0 50%;transform:scaleX(0.850);">B:</span>
<div class="in" style="left:284.6px;top:438.1px;width:25px;height:14.6px;"></div>
<span class="t" style="top:439.8px;height:11.4px;line-height:11.4px;font-size:9.5px;left:288.4px;transform-origin:0 50%;transform:scaleX(0.850);color:#e8e8e8;">9</span>
<div class="rad" style="left:331.7px;top:340.7px;width:9.6px;height:9.6px;"></div>
<span class="t" style="top:340.25px;height:11.5px;line-height:11.5px;font-size:9.6px;left:345.4px;transform-origin:0 50%;transform:scaleX(0.850);">L:</span>
<div class="in" style="left:364px;top:338.3px;width:30px;height:14.6px;"></div>
<span class="t" style="top:340px;height:11.4px;line-height:11.4px;font-size:9.5px;left:369px;transform-origin:0 50%;transform:scaleX(0.850);color:#e8e8e8;">4</span>
<div class="rad" style="left:331.7px;top:360.1px;width:9.6px;height:9.6px;"></div>
<span class="t" style="top:359.65px;height:11.5px;line-height:11.5px;font-size:9.6px;left:345.4px;transform-origin:0 50%;transform:scaleX(0.850);">a:</span>
<div class="in" style="left:364px;top:357.7px;width:30px;height:14.6px;"></div>
<span class="t" style="top:359.4px;height:11.4px;line-height:11.4px;font-size:9.5px;left:369px;transform-origin:0 50%;transform:scaleX(0.850);color:#e8e8e8;">-2</span>
<div class="rad" style="left:331.7px;top:379.4px;width:9.6px;height:9.6px;"></div>
<span class="t" style="top:378.95px;height:11.5px;line-height:11.5px;font-size:9.6px;left:345.4px;transform-origin:0 50%;transform:scaleX(0.850);">b:</span>
<div class="in" style="left:364px;top:377px;width:30px;height:14.6px;"></div>
<span class="t" style="top:378.7px;height:11.4px;line-height:11.4px;font-size:9.5px;left:369px;transform-origin:0 50%;transform:scaleX(0.850);color:#e8e8e8;">3</span>
<span class="t" style="top:401.15px;height:11.5px;line-height:11.5px;font-size:9.6px;left:309px;width:49.6px;text-align:right;transform-origin:100% 50%;transform:scaleX(0.850);">C:</span>
<div class="in" style="left:364px;top:399.2px;width:24.8px;height:14.6px;"></div>
<span class="t" style="top:400.9px;height:11.4px;line-height:11.4px;font-size:9.5px;left:367.8px;transform-origin:0 50%;transform:scaleX(0.850);color:#e8e8e8;">73</span>
<span class="t" style="top:401.15px;height:11.5px;line-height:11.5px;font-size:9.6px;left:393.8px;transform-origin:0 50%;transform:scaleX(0.961);">%</span>
<span class="t" style="top:420.65px;height:11.5px;line-height:11.5px;font-size:9.6px;left:307.94px;width:50.66px;text-align:right;transform-origin:100% 50%;transform:scaleX(0.850);">M:</span>
<div class="in" style="left:364px;top:418.7px;width:24.8px;height:14.6px;"></div>
<span class="t" style="top:420.4px;height:11.4px;line-height:11.4px;font-size:9.5px;left:367.8px;transform-origin:0 50%;transform:scaleX(0.850);color:#e8e8e8;">64</span>
<span class="t" style="top:420.65px;height:11.5px;line-height:11.5px;font-size:9.6px;left:393.8px;transform-origin:0 50%;transform:scaleX(0.961);">%</span>
<span class="t" style="top:440.05px;height:11.5px;line-height:11.5px;font-size:9.6px;left:310.06px;width:48.54px;text-align:right;transform-origin:100% 50%;transform:scaleX(0.850);">Y:</span>
<div class="in" style="left:364px;top:438.1px;width:24.8px;height:14.6px;"></div>
<span class="t" style="top:439.8px;height:11.4px;line-height:11.4px;font-size:9.5px;left:367.8px;transform-origin:0 50%;transform:scaleX(0.850);color:#e8e8e8;">69</span>
<span class="t" style="top:440.05px;height:11.5px;line-height:11.5px;font-size:9.6px;left:393.8px;transform-origin:0 50%;transform:scaleX(0.961);">%</span>
<span class="t" style="top:458.95px;height:11.5px;line-height:11.5px;font-size:9.6px;left:309.53px;width:49.07px;text-align:right;transform-origin:100% 50%;transform:scaleX(0.850);">K:</span>
<div class="in" style="left:364px;top:457px;width:24.8px;height:14.6px;"></div>
<span class="t" style="top:458.7px;height:11.4px;line-height:11.4px;font-size:9.5px;left:367.8px;transform-origin:0 50%;transform:scaleX(0.850);color:#e8e8e8;">83</span>
<span class="t" style="top:458.95px;height:11.5px;line-height:11.5px;font-size:9.6px;left:393.8px;transform-origin:0 50%;transform:scaleX(0.961);">%</span>
<span class="t" style="top:462.7px;height:10.8px;line-height:10.8px;font-size:9px;left:254.6px;transform-origin:0 50%;transform:scaleX(0.850);color:#cfcfcf;">#</span>
<div class="in" style="left:265.3px;top:460.4px;width:56.4px;height:14.8px;border-color:#2f8be6;"></div>
<div class="a" style="left:266.7px;top:462.2px;width:31px;height:11.2px;background:#1464c8;"></div>
<span class="t" style="top:462.1px;height:11.4px;line-height:11.4px;font-size:9.5px;left:268.6px;transform-origin:0 50%;transform:scaleX(0.902);color:#fff;">0d1009</span>
<div class="a" style="left:37.7px;top:433.3px;width:8.5px;height:8.5px;background:#4b4b4b;border:1px solid #777;border-radius:1px"></div>
<span class="t" style="top:432.45px;height:11.5px;line-height:11.5px;font-size:9.6px;left:51.1px;transform-origin:0 50%;transform:scaleX(0.894);">Only Web Colors</span>
<div class="a" style="left:761px;top:0px;width:1px;height:499px;background:#050505;"></div>
</body>
</html>
